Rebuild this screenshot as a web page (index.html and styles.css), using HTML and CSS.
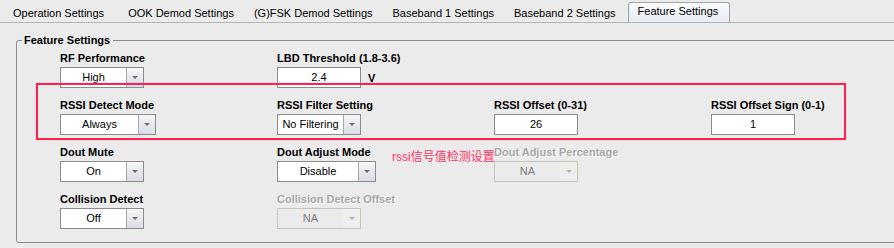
FILE: index.html
```html
<!DOCTYPE html>
<html>
<head>
    <title>Feature Settings</title>
    <link rel="stylesheet" href="styles.css">
</head>
<body>
    <div class="page">
        <div class="tabs">
            <div class="tab first">Operation Settings</div>
            <div class="tab">OOK Demod Settings</div>
            <div class="tab">(G)FSK Demod Settings</div>
            <div class="tab">Baseband 1 Settings</div>
            <div class="tab">Baseband 2 Settings</div>
            <div class="tab active">Feature Settings</div>
        </div>
        <fieldset class="group">
            <legend>Feature Settings</legend>
            <div class="grid">
                <div class="field">
                    <div class="label">RF Performance</div>
                    <div class="combo"><span class="val">High</span><span class="btn"></span></div>
                </div>
                <div class="field">
                    <div class="label">LBD Threshold (1.8-3.6)</div>
                    <div class="line">
                        <div class="text">2.4</div>
                        <span class="unit">V</span>
                    </div>
                </div>
                <div class="field"></div>
                <div class="field"></div>

                <div class="field">
                    <div class="label">RSSI Detect Mode</div>
                    <div class="combo wide"><span class="val">Always</span><span class="btn"></span></div>
                </div>
                <div class="field">
                    <div class="label">RSSI Filter Setting</div>
                    <div class="combo"><span class="val">No Filtering</span><span class="btn"></span></div>
                </div>
                <div class="field">
                    <div class="label">RSSI Offset (0-31)</div>
                    <div class="text">26</div>
                </div>
                <div class="field">
                    <div class="label">RSSI Offset Sign (0-1)</div>
                    <div class="text">1</div>
                </div>

                <div class="field">
                    <div class="label">Dout Mute</div>
                    <div class="combo"><span class="val">On</span><span class="btn"></span></div>
                </div>
                <div class="field">
                    <div class="label">Dout Adjust Mode</div>
                    <div class="combo wider"><span class="val">Disable</span><span class="btn"></span></div>
                </div>
                <div class="field">
                    <div class="label off">Dout Adjust Percentage</div>
                    <div class="combo off"><span class="val">NA</span><span class="btn"></span></div>
                </div>
                <div class="field"></div>

                <div class="field">
                    <div class="label">Collision Detect</div>
                    <div class="combo"><span class="val">Off</span><span class="btn"></span></div>
                </div>
                <div class="field">
                    <div class="label off">Collision Detect Offset</div>
                    <div class="combo off"><span class="val">NA</span><span class="btn"></span></div>
                </div>
            </div>
        </fieldset>
        <div class="mark"></div>
        <div class="note">rssi信号值检测设置</div>
    </div>
</body>
</html>
```

FILE: styles.css
```css
*{
    padding: 0;
    margin: 0;
    box-sizing: border-box;
}
body{
    background: #ebebeb;
    font-family: "Liberation Sans", Arial, sans-serif;
    font-size: 11px;
    color: #000;
}
.page{
    position: relative;
    width: 894px;
    height: 248px;
    overflow: hidden;
}
.tabs{
    display: flex;
    align-items: flex-end;
    height: 23px;
    border-bottom: 1px solid #b4b4b4;
}
.tab{
    padding: 6px 10px 2px;
    line-height: 14px;
    white-space: nowrap;
}
.tab.first{
    padding-left: 13px;
    padding-right: 14px;
}
.tab.active{
    margin-left: 2px;
    padding: 1px 11px 4px 9px;
    border: 1px solid #a4a4a4;
    border-bottom: none;
    border-radius: 3px 3px 0 0;
    background: linear-gradient(#fbfcfd, #e7ecf3);
    box-shadow: inset 1px 0 #cdf1f7;
}
.group{
    margin: 10px 14px 0 16px;
    border: 1px solid #8c8c8c;
    border-radius: 3px;
    padding: 0 0 13px;
}
.group legend{
    margin-left: 5px;
    padding: 0 3px 0 2px;
    font-weight: bold;
    line-height: 14px;
}
.grid{
    display: grid;
    grid-template-columns: repeat(4, 217px);
    row-gap: 10px;
    padding: 4px 0 0 43px;
}
.label{
    font-weight: bold;
    line-height: 14px;
    margin-bottom: 2px;
    white-space: nowrap;
}
.label.off{
    color: #a6a6a6;
    text-shadow: 1px 1px 0 #fff;
}
.line{
    display: flex;
    align-items: center;
    gap: 7px;
}
.unit{
    font-weight: bold;
}
.text{
    width: 84px;
    height: 21px;
    border: 1px solid #8c8c8c;
    background: #fff;
    text-align: center;
    line-height: 19px;
}
.combo{
    display: flex;
    width: 84px;
    height: 21px;
    border: 1px solid #8c8c8c;
    background: #fff;
}
.combo.wide{
    width: 96px;
}
.combo.wider{
    width: 99px;
}
.combo .val{
    flex: 1;
    text-align: center;
    line-height: 19px;
}
.combo .btn{
    width: 17px;
    border-left: 1px solid #a8a8a8;
    background: linear-gradient(#f6f6f7, #d9dde5);
    display: flex;
    align-items: center;
    justify-content: center;
}
.combo .btn::after{
    content: "";
    border-left: 3px solid transparent;
    border-right: 3px solid transparent;
    border-top: 3px solid #6e6e6e;
}
.combo.off{
    border-color: #c6c6b8;
    background: #ebebeb;
    color: #7c7c7c;
}
.combo.off .btn{
    border-left: none;
    background: #eeeeee;
}
.combo.off .btn::after{
    border-top-color: #b4b4b4;
}
.mark{
    position: absolute;
    left: 36px;
    top: 83px;
    width: 810px;
    height: 57px;
    border: 2px solid #fc2253;
    box-shadow: 0 0 1px #ff9ab0;
}
.note{
    position: absolute;
    left: 392px;
    top: 149px;
    font-family: "Liberation Sans", "Noto Sans CJK SC", sans-serif;
    font-size: 12px;
    line-height: 16px;
    color: #ff3366;
    white-space: nowrap;
}
```
